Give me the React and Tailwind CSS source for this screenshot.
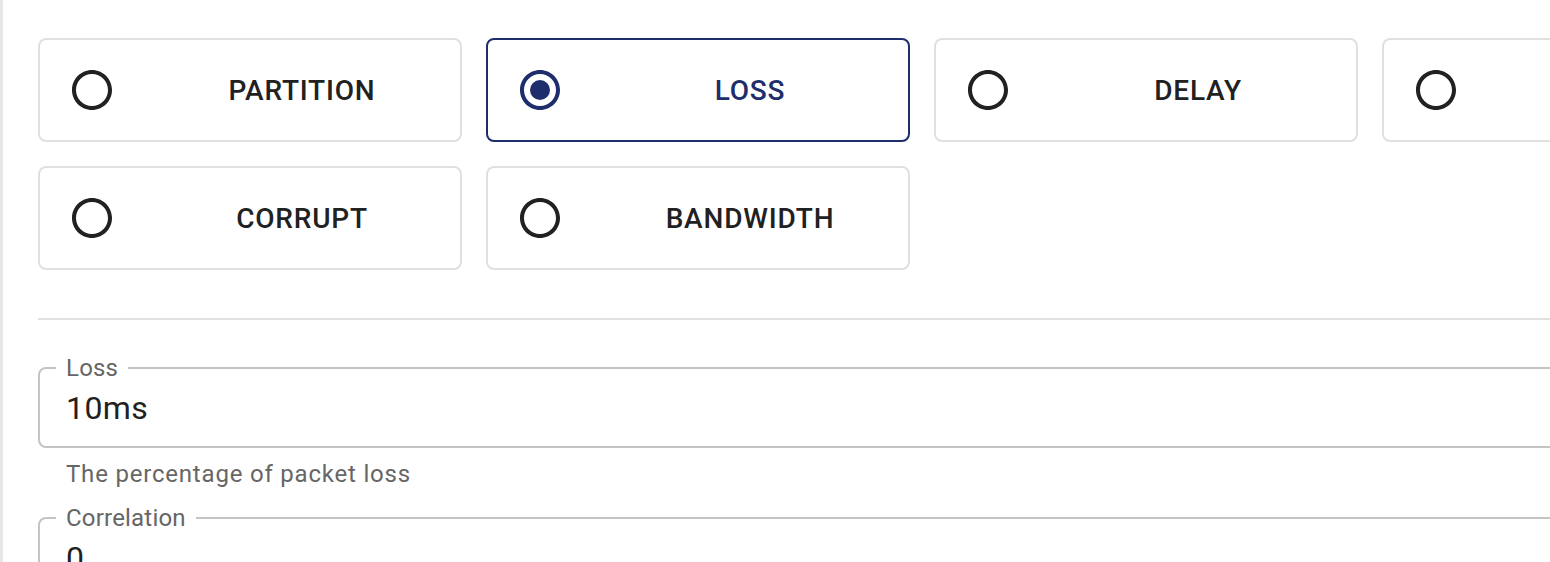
import React from 'react'

const actions = ['partition', 'loss', 'delay', 'duplicate', 'corrupt', 'bandwidth']

const RadioIcon = ({ checked }) => (
  <svg width="48" height="48" viewBox="0 0 24 24" fill="currentColor">
    <path d="M12 2C6.48 2 2 6.48 2 12s4.48 10 10 10 10-4.48 10-10S17.52 2 12 2zm0 18c-4.42 0-8-3.58-8-8s3.58-8 8-8 8 3.58 8 8-3.58 8-8 8z" />
    {checked && <circle cx="12" cy="12" r="5" />}
  </svg>
)

const ActionCard = ({ name, checked }) => (
  <div
    className={
      checked
        ? 'flex h-[104px] items-center rounded-[8px] border-2 border-[#1e2d6b] text-[#1e2d6b]'
        : 'flex h-[104px] items-center rounded-[8px] border-2 border-[#e0e0e0] text-[#212121]'
    }
  >
    <div className="flex w-[104px] justify-center">
      <RadioIcon checked={checked} />
    </div>
    <span className="flex-1 pt-[2px] text-center text-[28px] font-medium uppercase tracking-[0.8px]">
      {name}
    </span>
  </div>
)

const Field = ({ label, value, helper }) => (
  <div className="flex flex-col">
    <fieldset className="rounded-[8px] border-2 border-[#c4c4c4] px-[16px] pb-[22px]">
      <legend className="px-[10px] text-[24px] leading-[24px] tracking-[0.2px] text-[#666666]">{label}</legend>
      <div className="pl-[10px] pt-[12px] text-[32px] leading-[32px] tracking-[0.4px] text-[#212121]">{value}</div>
    </fieldset>
    {helper && (
      <p className="mt-[8px] px-[28px] text-[24px] leading-[36px] tracking-[0.8px] text-[#666666]">{helper}</p>
    )}
  </div>
)

export default function App() {
  return (
    <div className="h-[562px] overflow-hidden bg-white font-['Roboto',sans-serif]">
      <div className="flex h-full border-l-[3px] border-[#e6e6e6]">
        <div className="w-[1800px] shrink-0 pl-[35px] pt-[38px]">
          <div className="grid w-[1768px] grid-cols-4 gap-[24px]">
            {actions.map((a) => (
              <ActionCard key={a} name={a} checked={a === 'loss'} />
            ))}
          </div>
          <div className="mt-[48px] h-[2px] bg-[#e0e0e0]" />
          <div className="mt-[36px] flex flex-col gap-[14px]">
            <Field label="Loss" value="10ms" helper="The percentage of packet loss" />
            <Field label="Correlation" value="0" />
          </div>
        </div>
      </div>
    </div>
  )
}
